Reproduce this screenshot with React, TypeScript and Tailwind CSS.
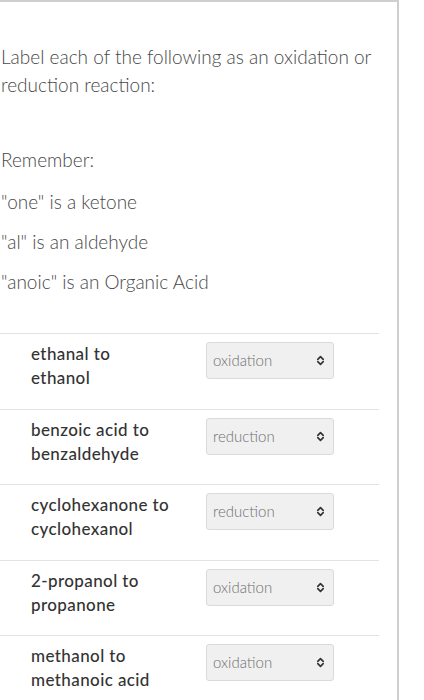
import React from "react";

const rows = [
  { a: "ethanal to", b: "ethanol", v: "oxidation" },
  { a: "benzoic acid to", b: "benzaldehyde", v: "reduction" },
  { a: "cyclohexanone to", b: "cyclohexanol", v: "reduction" },
  { a: "2-propanol to", b: "propanone", v: "oxidation" },
  { a: "methanol to", b: "methanoic acid", v: "oxidation" },
];

function Chevrons() {
  return (
    <svg width="9" height="11" viewBox="0 0 9 11" fill="none" stroke="#333" strokeWidth="1.7" strokeLinecap="round" strokeLinejoin="round">
      <path d="M1.8 4.3 L4.5 1.7 L7.2 4.3" />
      <path d="M1.8 6.7 L4.5 9.3 L7.2 6.7" />
    </svg>
  );
}

export default function App() {
  return (
    <div className="w-[424px] h-[700px] bg-white overflow-hidden" style={{ fontFamily: "Lato, 'Open Sans', sans-serif" }}>
      <div className="w-[399px] border-t-2 border-r-2 border-[#cfcfcf] h-[720px]">
        <div className="pt-[41px] pl-[1px] text-[19px] leading-[28px] font-light text-[#484848]">
          <p>Label each of the following as an oxidation or reduction reaction:</p>
          <p className="mt-[47px]">Remember:</p>
          <p className="mt-[14px]">"one" is a ketone</p>
          <p className="mt-[12px]">"al" is an aldehyde</p>
          <p className="mt-[12px]">"anoic" is an Organic Acid</p>
        </div>
        <div className="mt-[37px] w-[379px]">
          {rows.map((r, i) => (
            <div key={i} className="h-[75.5px] border-t border-[#e3e3e3] flex items-start pt-[8px]">
              <div className="w-[206px] pl-[31px] text-[17px] leading-[24px] font-medium tracking-[0.4px] text-[#333]">
                <div>{r.a}</div>
                <div>{r.b}</div>
              </div>
              <div className="w-[128px] h-[37px] rounded-[3px] border border-[#dadada] bg-[#f0f0f0] flex items-center justify-between pl-[6px] pr-[8px]">
                <span className="text-[15px] font-light text-[#6f6f6f]">{r.v}</span>
                <Chevrons />
              </div>
            </div>
          ))}
        </div>
      </div>
    </div>
  );
}
